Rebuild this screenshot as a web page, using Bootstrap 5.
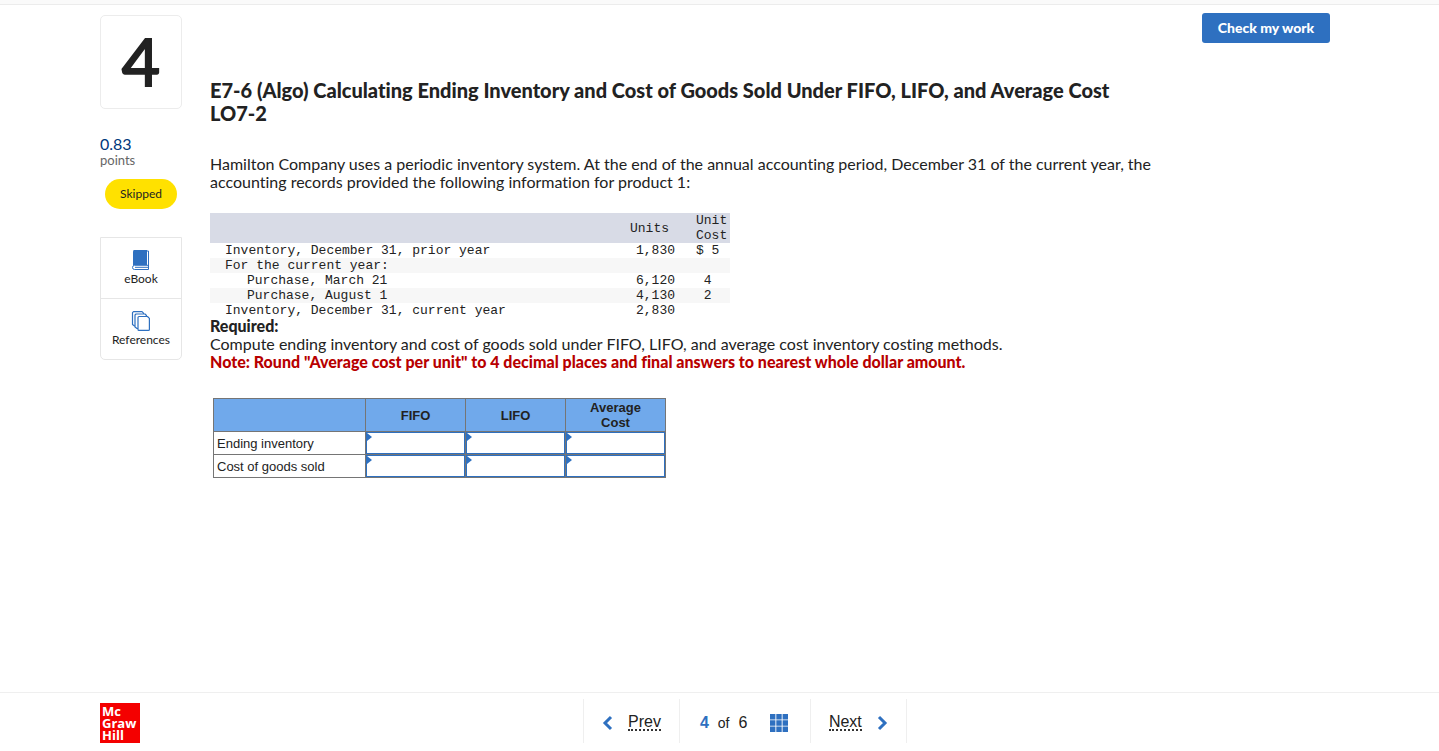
<!DOCTYPE html>
<html lang="en">
<head>
<meta charset="utf-8">
<meta name="viewport" content="width=device-width, initial-scale=1">
<title>Question 4</title>
<link href="https://cdn.jsdelivr.net/npm/bootstrap@5.3.0/dist/css/bootstrap.min.css" rel="stylesheet">
<style>
  body { font-family: Lato, "Open Sans", sans-serif; font-size: 16px; line-height: 18px; font-variant-ligatures: none; color: #222; background: #fff; }
  .top-strip { height: 5px; background: #fafafa; border-bottom: 1px solid #ececec; }
  .page-main { gap: 28px; padding: 0 109px 70px 100px; }
  .side-panel { width: 82px; padding-top: 10px; font-size: 12px; }
  .question-number { height: 94px; border: 1px solid #ececec; border-radius: 5px; font-size: 66px; line-height: 90px; -webkit-text-stroke: 2px #222; }
  .points { margin-top: 26px; line-height: 17px; color: #666; font-size: 13px; }
  .points-value { font-size: 16px; color: #00377b; }
  .status-pill { width: 72px; margin: 10px auto 0; line-height: 30px; font-size: 12px; background: #ffe100; color: #222; }
  .resources { margin-top: 28px; border: 1px solid #e6e6e6; border-radius: 0 0 5px 5px; }
  .resources a { height: 60px; padding-top: 12px; gap: 1px; color: #222; font-size: 12px; line-height: 16px; }
  .resources a + a { height: 61px; border-top: 1px solid #e6e6e6; }
  .question { padding: 74px 12px 0 0; }
  .question h1 { margin: 0 0 30px; font-size: 20px; font-weight: 900; line-height: 23px; }
  .record-table { width: 520px; margin-top: 22px; font: 13px/15px "Liberation Mono", monospace; }
  .record-table th, .record-table td { padding: 0; font-weight: 400; }
  .record-table thead { background: #d8dbe6; }
  .record-table tbody tr:nth-child(even) { background: #f7f7f7; }
  .record-table td:first-child { padding-left: 15px; }
  .record-table td.indented { padding-left: 37px; }
  .record-table .units { width: 100px; padding-right: 20px; }
  .record-table th.units { padding-right: 26px; }
  .record-table .cost { width: 35px; padding-left: 1px; white-space: pre; }
  .strong-text { font-weight: 900; }
  .note { color: #b80000; }
  .instructions { margin-top: -1px; }
  .answer-table { width: 453px; margin: 27px 0 0 3px; font: 13px/15px "Liberation Sans", sans-serif; border-collapse: collapse; table-layout: fixed; }
  .answer-table th, .answer-table td { border: 1px solid #757575; padding: 0; }
  .answer-table thead th { height: 33px; background: #70a9eb; padding: 0 15px; }
  .answer-table thead th:first-child { width: 152px; }
  .answer-table tbody th { padding: 0 3px; font-weight: 400; }
  .answer-table td { height: 23px; position: relative; }
  .answer-table td::before { content: ""; position: absolute; top: 1px; left: 1px; border: 4px solid transparent; border-left: 5px solid #2e70c0; border-right: 0; }
  .answer-table input { display: block; width: 100%; height: 22px; padding: 0 8px; border: 1px solid #2e70c0; outline: 0; }
  .check { margin-top: 8px; width: 128px; height: 30px; padding: 0; border-radius: 3px; background: #2e70c0; border: 0; color: #fff; font-size: 14px; font-weight: 900; line-height: 30px; }
  .check:hover { background: #245ca0; color: #fff; }
  .page-footer { height: 59px; border-top: 1px solid #efefef; background: #fff; padding-left: 100px; }
  .brand-mark { width: 40px; height: 40px; margin-top: 10px; padding: 2px 0 0 2px; background: #f40000; color: #fff; font: 700 13px/12px "Open Sans", sans-serif; }
  .pager { margin-left: 443px; height: 44px; margin-top: 6px; font: 16px/20px "Liberation Sans", sans-serif; }
  .pager > * { border-right: 1px solid #efefef; height: 100%; padding-top: 3px; }
  .pager > :first-child { border-left: 1px solid #efefef; }
  .pager > a { color: #222; padding-left: 18px; padding-right: 18px; gap: 14px; }
  .pager a span { border-bottom: 2px dotted #333; line-height: 14px; }
  .position { width: 131px; padding-left: 20px; gap: 9px; }
  .position b { color: #2e70c0; }
  .position button { margin-left: 14px; }
</style>
</head>
<body>
<div class="top-strip"></div>
<main class="page-main d-flex align-items-start">
  <aside class="side-panel flex-shrink-0">
    <div class="question-number text-center">4</div>
    <div class="points"><div class="points-value">0.83</div>points</div>
    <div class="status-pill rounded-pill text-center">Skipped</div>
    <nav class="resources" aria-label="Resources">
      <a href="#" class="d-flex flex-column align-items-center text-decoration-none">
        <svg width="20" height="20" viewBox="0 0 20 20"><path d="M3 0h13v15H4q-1.500 0-2 .8V2q0-2 1-2z" fill="#2e70c0"/><path d="M16 1h1.500v18.500H3.500q-2 0-2-2t2-2.200h14M4 17.300h13" fill="none" stroke="#2e70c0"/></svg>
        <span>eBook</span>
      </a>
      <a href="#" class="d-flex flex-column align-items-center text-decoration-none">
        <svg width="20" height="20" viewBox="0 0 20 20" fill="#fff" stroke="#2e70c0" stroke-width="1.200" stroke-linejoin="round"><path d="M2.500.6H11l1.500 1.500V15H3.500l-2-1.500V1.600z"/><path d="M5 3h9l1.500 1.500V17.500H6L4 16V4z"/><path d="M8 5.500h8.500l1.900 1.900v11q0 1-1 1H8q-1 0-1-1v-12q0-.9 1-.9z"/></svg>
        <span>References</span>
      </a>
    </nav>
  </aside>
  <section class="question flex-fill">
    <h1>E7-6 (Algo) Calculating Ending Inventory and Cost of Goods Sold Under FIFO, LIFO, and Average Cost <span class="text-nowrap">LO7-2</span></h1>
    <p class="mb-0">Hamilton Company uses a periodic inventory system. At the end of the annual accounting period, December 31 of the current year, the accounting records provided the following information for product 1:</p>
    <table class="record-table">
      <thead><tr><th></th><th class="units text-end">Units</th><th class="cost">Unit
Cost</th></tr></thead>
      <tbody>
        <tr><td>Inventory, December 31, prior year</td><td class="units text-end">1,830</td><td class="cost">$ 5</td></tr>
        <tr><td>For the current year:</td><td class="units"></td><td class="cost"></td></tr>
        <tr><td class="indented">Purchase, March 21</td><td class="units text-end">6,120</td><td class="cost"> 4</td></tr>
        <tr><td class="indented">Purchase, August 1</td><td class="units text-end">4,130</td><td class="cost"> 2</td></tr>
        <tr><td>Inventory, December 31, current year</td><td class="units text-end">2,830</td><td class="cost"></td></tr>
      </tbody>
    </table>
    <div class="instructions">
      <div class="strong-text">Required:</div>
      <div>Compute ending inventory and cost of goods sold under FIFO, LIFO, and average cost inventory costing methods.</div>
      <div class="note strong-text">Note: Round "Average cost per unit" to 4 decimal places and final answers to nearest whole dollar amount.</div>
    </div>
    <table class="answer-table">
      <thead class="text-center"><tr><th></th><th>FIFO</th><th>LIFO</th><th>Average Cost</th></tr></thead>
      <tbody>
        <tr><th scope="row">Ending inventory</th><td><input aria-label="Ending inventory FIFO"></td><td><input aria-label="Ending inventory LIFO"></td><td><input aria-label="Ending inventory average cost"></td></tr>
        <tr><th scope="row">Cost of goods sold</th><td><input aria-label="Cost of goods sold FIFO"></td><td><input aria-label="Cost of goods sold LIFO"></td><td><input aria-label="Cost of goods sold average cost"></td></tr>
      </tbody>
    </table>
  </section>
  <button type="button" class="check btn flex-shrink-0">Check my work</button>
</main>
<footer class="page-footer fixed-bottom d-flex">
  <div class="brand-mark">Mc<br>Graw<br>Hill</div>
  <nav class="pager d-flex" aria-label="Questions">
    <a href="#" class="d-flex align-items-center text-decoration-none"><svg width="12" height="16" viewBox="0 0 12 16" fill="none" stroke="#2e70c0" stroke-width="3"><path d="M9 2L3 8l6 6"/></svg><span>Prev</span></a>
    <div class="position d-flex align-items-center"><b>4</b><small>of</small><span>6</span>
      <button type="button" class="btn p-0 border-0 d-flex" aria-label="All questions"><svg width="18" height="18" viewBox="0 0 18 18" fill="#2e70c0"><path d="M0 0h5.400v5.400H0zM6.300 0h5.400v5.400H6.300zM12.600 0H18v5.400h-5.400zM0 6.300h5.400v5.400H0zM6.300 6.300h5.400v5.400H6.300zM12.600 6.300H18v5.400h-5.400zM0 12.600h5.400V18H0zM6.300 12.600h5.400V18H6.300zM12.600 12.600H18V18h-5.400z"/></svg></button></div>
    <a href="#" class="d-flex align-items-center text-decoration-none"><span>Next</span><svg width="12" height="16" viewBox="0 0 12 16" fill="none" stroke="#2e70c0" stroke-width="3"><path d="M3 2l6 6-6 6"/></svg></a>
  </nav>
</footer>
<script src="https://cdn.jsdelivr.net/npm/bootstrap@5.3.0/dist/js/bootstrap.bundle.min.js"></script>
</body>
</html>
